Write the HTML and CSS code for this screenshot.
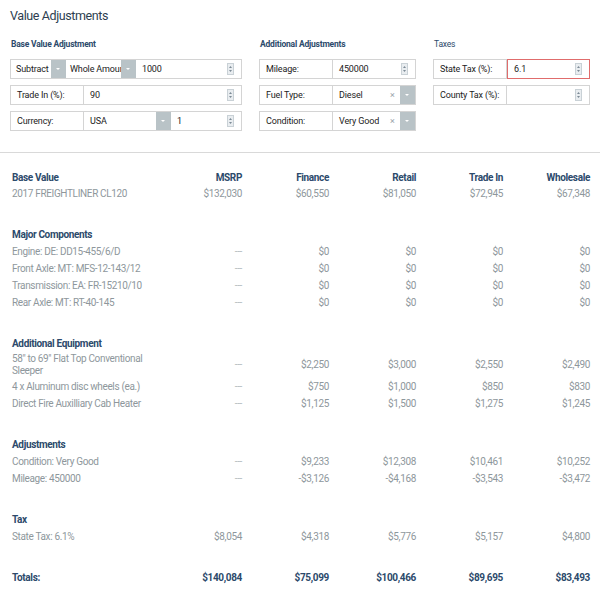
FILE: index.html
```html
<!DOCTYPE html>
<html lang="en">
<head>
    <meta charset="UTF-8">
    <title>Value Adjustments</title>
    <link rel="stylesheet" href="styles.css">
</head>
<body>
    <div class="page">
        <h1 class="page-title">Value Adjustments</h1>

        <!-- form area -->
        <div class="form-grid">
            <div class="form-col">
                <div class="group-title">Base Value Adjustment</div>
                <div class="field">
                    <span class="cell w-40">Subtract</span><span class="drop"></span>
                    <span class="cell w-55">Whole Amount</span><span class="drop"></span>
                    <span class="cell value grow">1000</span><span class="spin"><svg width="7" height="12" viewBox="0 0 7 12"><rect x="0.5" y="0.5" width="6" height="11" fill="#e9edf0" stroke="#c9d1d6"/><path d="M2 5L3.5 3L5 5Z M2 7L3.5 9L5 7Z" fill="#7d8b96"/></svg></span>
                </div>
                <div class="field">
                    <span class="cell label">Trade In (%):</span>
                    <span class="cell value grow">90</span><span class="spin"><svg width="7" height="12" viewBox="0 0 7 12"><rect x="0.5" y="0.5" width="6" height="11" fill="#e9edf0" stroke="#c9d1d6"/><path d="M2 5L3.5 3L5 5Z M2 7L3.5 9L5 7Z" fill="#7d8b96"/></svg></span>
                </div>
                <div class="field">
                    <span class="cell label">Currency:</span>
                    <span class="cell value w-72">USA</span><span class="drop"></span>
                    <span class="cell value grow">1</span><span class="spin"><svg width="7" height="12" viewBox="0 0 7 12"><rect x="0.5" y="0.5" width="6" height="11" fill="#e9edf0" stroke="#c9d1d6"/><path d="M2 5L3.5 3L5 5Z M2 7L3.5 9L5 7Z" fill="#7d8b96"/></svg></span>
                </div>
            </div>

            <div class="form-col">
                <div class="group-title">Additional Adjustments</div>
                <div class="field">
                    <span class="cell label">Mileage:</span>
                    <span class="cell value grow">450000</span><span class="spin"><svg width="7" height="12" viewBox="0 0 7 12"><rect x="0.5" y="0.5" width="6" height="11" fill="#e9edf0" stroke="#c9d1d6"/><path d="M2 5L3.5 3L5 5Z M2 7L3.5 9L5 7Z" fill="#7d8b96"/></svg></span>
                </div>
                <div class="field">
                    <span class="cell label">Fuel Type:</span>
                    <span class="cell value grow">Diesel</span><span class="clear">×</span><span class="drop"></span>
                </div>
                <div class="field">
                    <span class="cell label">Condition:</span>
                    <span class="cell value grow">Very Good</span><span class="clear">×</span><span class="drop"></span>
                </div>
            </div>

            <div class="form-col">
                <div class="group-title plain">Taxes</div>
                <div class="field">
                    <span class="cell label">State Tax (%):</span>
                    <span class="input-wrap error"><span class="cell value grow">6.1</span><span class="spin"><svg width="7" height="12" viewBox="0 0 7 12"><rect x="0.5" y="0.5" width="6" height="11" fill="#e9edf0" stroke="#c9d1d6"/><path d="M2 5L3.5 3L5 5Z M2 7L3.5 9L5 7Z" fill="#7d8b96"/></svg></span></span>
                </div>
                <div class="field">
                    <span class="cell label">County Tax (%):</span>
                    <span class="cell value grow"></span><span class="spin"><svg width="7" height="12" viewBox="0 0 7 12"><rect x="0.5" y="0.5" width="6" height="11" fill="#e9edf0" stroke="#c9d1d6"/><path d="M2 5L3.5 3L5 5Z M2 7L3.5 9L5 7Z" fill="#7d8b96"/></svg></span>
                </div>
            </div>
        </div>

        <hr class="divider">

        <table class="values">
            <colgroup>
                <col class="c-name">
                <col><col><col><col><col>
            </colgroup>
            <tbody>
                <tr class="head top">
                    <td>Base Value</td><td>MSRP</td><td>Finance</td><td>Retail</td><td>Trade In</td><td>Wholesale</td>
                </tr>
                <tr>
                    <td>2017 FREIGHTLINER CL120</td><td>$132,030</td><td>$60,550</td><td>$81,050</td><td>$72,945</td><td>$67,348</td>
                </tr>
            </tbody>
            <tbody>
                <tr class="head section"><td colspan="6">Major Components</td></tr>
                <tr><td>Engine: DE: DD15-455/6/D</td><td class="dash">---</td><td>$0</td><td>$0</td><td>$0</td><td>$0</td></tr>
                <tr><td>Front Axle: MT: MFS-12-143/12</td><td class="dash">---</td><td>$0</td><td>$0</td><td>$0</td><td>$0</td></tr>
                <tr><td>Transmission: EA: FR-15210/10</td><td class="dash">---</td><td>$0</td><td>$0</td><td>$0</td><td>$0</td></tr>
                <tr><td>Rear Axle: MT: RT-40-145</td><td class="dash">---</td><td>$0</td><td>$0</td><td>$0</td><td>$0</td></tr>
            </tbody>
            <tbody>
                <tr class="head section"><td colspan="6">Additional Equipment</td></tr>
                <tr><td class="wrap">58" to 69" Flat Top Conventional Sleeper</td><td class="dash">---</td><td>$2,250</td><td>$3,000</td><td>$2,550</td><td>$2,490</td></tr>
                <tr><td>4 x Aluminum disc wheels (ea.)</td><td class="dash">---</td><td>$750</td><td>$1,000</td><td>$850</td><td>$830</td></tr>
                <tr><td>Direct Fire Auxilliary Cab Heater</td><td class="dash">---</td><td>$1,125</td><td>$1,500</td><td>$1,275</td><td>$1,245</td></tr>
            </tbody>
            <tbody>
                <tr class="head section"><td colspan="6">Adjustments</td></tr>
                <tr><td>Condition: Very Good</td><td class="dash">---</td><td>$9,233</td><td>$12,308</td><td>$10,461</td><td>$10,252</td></tr>
                <tr><td>Mileage: 450000</td><td class="dash">---</td><td>-$3,126</td><td>-$4,168</td><td>-$3,543</td><td>-$3,472</td></tr>
            </tbody>
            <tbody>
                <tr class="head section"><td colspan="6">Tax</td></tr>
                <tr><td>State Tax: 6.1%</td><td>$8,054</td><td>$4,318</td><td>$5,776</td><td>$5,157</td><td>$4,800</td></tr>
            </tbody>
            <tbody>
                <tr class="head section">
                    <td>Totals:</td><td>$140,084</td><td>$75,099</td><td>$100,466</td><td>$89,695</td><td>$83,493</td>
                </tr>
            </tbody>
        </table>
    </div>
</body>
</html>
```

FILE: styles.css
```css
body {
    margin: 0;
    font-family: Roboto, Lato, sans-serif;
    background: #fff;
    color: #333;
}

.page {
    padding: 7px 0 0;
}

.page-title {
    margin: 0 0 13px 10px;
    font-size: 12.5px;
    font-weight: 400;
    letter-spacing: -0.4px;
    color: #2d3e50;
    line-height: 18px;
}

/* form */
.form-grid {
    display: grid;
    grid-template-columns: 232px 157px 157px;
    column-gap: 17px;
    padding: 0 10px;
}

.group-title {
    font-size: 8.5px;
    font-weight: 700;
    letter-spacing: -0.2px;
    color: #2c4a6b;
    margin: 0 0 9px 1px;
    line-height: 12px;
}

.group-title.plain {
    font-weight: 400;
}

.field {
    display: flex;
    height: 20px;
    margin-bottom: 6px;
    border: 1px solid #d4d4d4;
    box-sizing: border-box;
    font-size: 9px;
    letter-spacing: -0.15px;
    color: #222;
}

.cell {
    display: flex;
    align-items: center;
    padding: 0 0 0 6px;
    box-sizing: border-box;
    white-space: nowrap;
    overflow: hidden;
}

.cell.label {
    width: 73px;
    border-right: 1px solid #d4d4d4;
    flex: none;
}

.grow {
    flex: 1;
}

.w-40 { width: 40px; flex: none; padding-left: 5px; }
.w-55 { width: 55px; flex: none; padding-left: 4px; }
.w-72 { width: 72px; flex: none; }

.drop {
    width: 15px;
    flex: none;
    background: #b9c3c7;
    position: relative;
}

.drop::after {
    content: "";
    position: absolute;
    left: 5px;
    top: 8px;
    width: 0;
    height: 0;
    border-left: 2.5px solid transparent;
    border-right: 2.5px solid transparent;
    border-top: 2px solid #fff;
}

.spin {
    width: 16px;
    flex: none;
    display: flex;
    align-items: center;
    padding-left: 2px;
    box-sizing: border-box;
}

.clear {
    width: 10px;
    flex: none;
    display: flex;
    align-items: center;
    color: #9aa3aa;
    font-size: 9px;
}

.input-wrap {
    flex: 1;
    display: flex;
}

.input-wrap.error {
    margin: -1px -1px -1px 0;
    border: 1px solid #e06c6c;
}

/* table */
.divider {
    border: 0;
    border-top: 1px solid #d9d9d9;
    margin: 15px 0 0;
}

.values {
    margin: 17px 0 0 12px;
    width: 578px;
    border-collapse: collapse;
    table-layout: fixed;
    font-size: 10px;
    letter-spacing: -0.35px;
}

.values col.c-name {
    width: 143px;
}

.values td {
    padding: 0;
    height: 17px;
    line-height: 12px;
    color: #8e979c;
    text-align: right;
    white-space: nowrap;
}

.values td:first-child {
    text-align: left;
}

.values td.wrap {
    white-space: normal;
    padding: 1px 0;
}

.values td.dash {
    color: #b5bcc0;
}

.values tr.head td {
    color: #2c4a6b;
    font-weight: 700;
}

.values tr.top td {
    height: 15px;
}

.values tr.section td {
    padding-top: 24px;
}
```
